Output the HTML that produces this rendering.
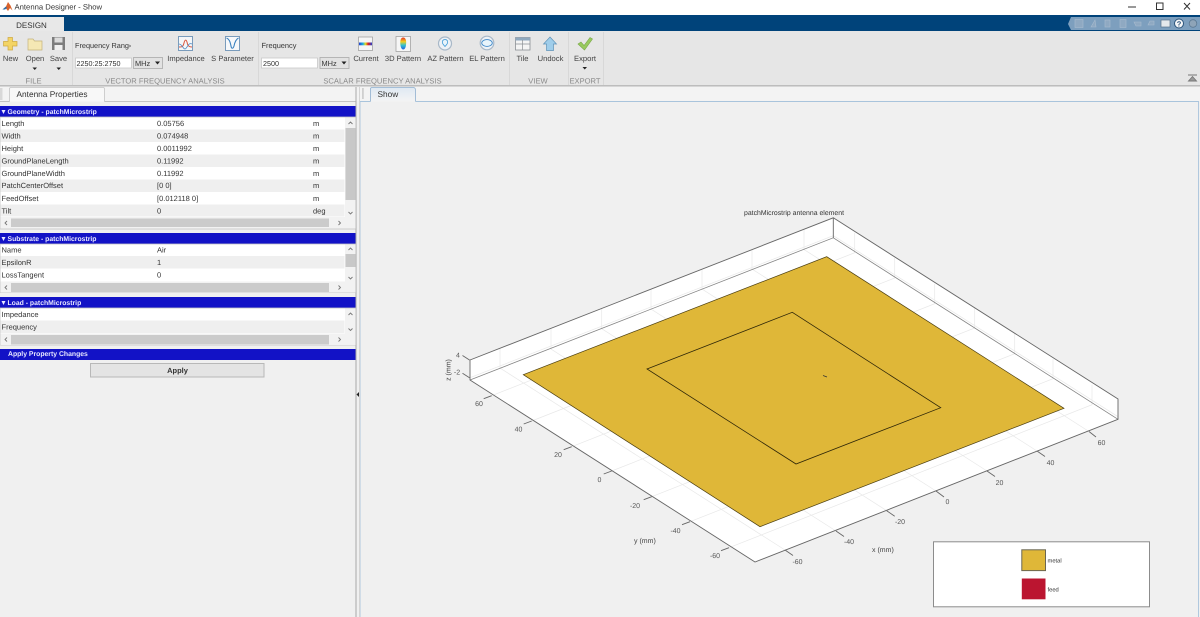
<!DOCTYPE html>
<html><head><meta charset="utf-8"><title>Antenna Designer - Show</title>
<style>
html,body{margin:0;padding:0;background:#f0f0f0;width:1200px;height:617px;overflow:hidden}
svg{display:block;filter:blur(.35px)}
text{font-family:"Liberation Sans",Arial,sans-serif;text-rendering:geometricPrecision}
.r{font-size:7.5px;fill:#333}
.l{font-size:7.6px;fill:#444;text-anchor:middle}
.g{font-size:7.6px;fill:#8a8a8a;text-anchor:middle}
.h{font-size:6.85px;fill:#e8e8ff;font-weight:bold}
.tk{font-size:7px;fill:#555;text-anchor:middle}
.gd{stroke:#e8e8e8;stroke-width:.7;fill:none}
.ax{stroke:#666;stroke-width:.9;fill:none}
.arr{stroke:#777;stroke-width:.9;fill:none}
</style></head><body>
<svg width="1200" height="617" viewBox="0 0 1200 617" xmlns="http://www.w3.org/2000/svg">
<defs>
<linearGradient id="tb" x1="0" x2="0" y1="0" y2="1"><stop offset="0" stop-color="#dfe9f3"/><stop offset="1" stop-color="#f4f4f4"/></linearGradient>
<linearGradient id="rb" x1="0" x2="1" y1="0" y2="0"><stop offset="0" stop-color="#2040d0"/><stop offset=".3" stop-color="#20b0e0"/><stop offset=".5" stop-color="#e0e020"/><stop offset=".7" stop-color="#e02020"/><stop offset="1" stop-color="#2040d0"/></linearGradient>
<linearGradient id="rv" x1="0" x2="0" y1="0" y2="1"><stop offset="0" stop-color="#e83020"/><stop offset=".35" stop-color="#f0d020"/><stop offset=".65" stop-color="#30c0d0"/><stop offset="1" stop-color="#2060e0"/></linearGradient>
</defs>
<rect width="1200" height="617" fill="#f0f0f0"/>

<!-- title bar -->
<rect width="1200" height="15" fill="#fff"/>
<path d="M2.500 9.500 L6 6.500 L8 2 L10.500 5.500 L12.500 10.500 L10 8 L8 11 L6 8.500Z" fill="#d9622b"/>
<path d="M2.500 9.500 L6 6.500 L7 8 L5 9.500Z" fill="#2c6fae"/>
<text x="14.500" y="9.500" font-size="7.700" fill="#333">Antenna Designer - Show</text>
<path d="M1128 7H1136" stroke="#333" stroke-width="1"/>
<rect x="1156.500" y="3" width="6.500" height="6.500" fill="none" stroke="#333" stroke-width="1"/>
<path d="M1184 3L1190 9.500M1190 3L1184 9.500" stroke="#333" stroke-width="1"/>

<!-- blue band -->
<rect y="15" width="1200" height="16" fill="#00437a"/>
<rect x="0" y="17" width="64" height="15" fill="#e8e8e8"/>
<text x="31.500" y="28" font-size="8" fill="#333" text-anchor="middle">DESIGN</text>

<!-- quick access -->
<path d="M1071 17H1200V30H1071L1068 24Z" fill="#7d9fbe"/>
<g fill="#8fa9c2" stroke="#a8bccf" stroke-width=".6">
<rect x="1075" y="19.500" width="8" height="8"/><path d="M1091 27L1095 20L1096 27Z"/><rect x="1105" y="20" width="5" height="7"/><rect x="1120" y="19.500" width="6" height="8"/><path d="M1134 22H1141V26H1136Z"/><path d="M1148 25H1154V21H1150Z"/>
</g>
<rect x="1161" y="20" width="9" height="7" fill="#e4e8ec" stroke="#55718c" stroke-width=".7"/>
<circle cx="1179" cy="23.500" r="4.500" fill="#f4f6f8" stroke="#2d557c" stroke-width="1"/>
<text x="1179" y="26.500" font-size="7.500" font-weight="bold" fill="#2d557c" text-anchor="middle">?</text>
<circle cx="1193" cy="23.500" r="3.800" fill="#8ea4b8" stroke="#5d7a94" stroke-width=".8"/>

<!-- ribbon -->
<rect y="31" width="1200" height="54" fill="#e6e6e6"/>
<rect y="85" width="1200" height="1.500" fill="#bdbdbd"/>
<g stroke="#d8d8d8" stroke-width="1"><path d="M72.500 32V85M258.500 32V85M509.500 32V85M568.500 32V85M603.500 32V85"/></g>

<!-- New -->
<path d="M8 37.500H12.500V41.500H17V46H12.500V50H8V46H3.500V41.500H8Z" fill="#f3d464" stroke="#cfa940" stroke-width=".7"/>
<!-- Open -->
<path d="M28 39H33L34.500 41H42V50H28Z" fill="#f5e8b4" stroke="#c4b27a" stroke-width=".7"/>
<!-- Save -->
<rect x="52" y="37" width="13" height="13" fill="#7d7d7d"/><rect x="54.500" y="37.500" width="8" height="5" fill="#dcdcdc"/><rect x="54.500" y="45" width="8" height="5" fill="#f0f0f0"/>
<text class="l" x="10.500" y="61">New</text><text class="l" x="35" y="61">Open</text><text class="l" x="58.500" y="61">Save</text>
<path d="M32.500 67.500H37L34.750 70ZM56.500 67.500H61L58.750 70ZM582.500 67H587L584.750 69.500Z" fill="#222"/>
<text class="g" x="33.500" y="83.500">FILE</text>

<text x="75" y="48" font-size="7.300" fill="#333">Frequency Rang</text>
<path d="M129.500 44.500l1.500 1.500-1.500 1.500" fill="#555"/>
<rect x="75.500" y="58" width="56" height="10" fill="#fff" stroke="#c8c8c8" stroke-width=".8"/>
<text x="76.500" y="66" font-size="7.200" fill="#333">2250:25:2750</text>
<rect x="133.500" y="57.500" width="29" height="11" fill="#e2e2e2" stroke="#aaa" stroke-width=".8"/>
<text x="135" y="66" font-size="7.400" fill="#333">MHz</text>
<path d="M155 61.500H160L157.500 64.500Z" fill="#222"/>

<rect x="178.500" y="36.500" width="14" height="14" fill="#f4f6f8" stroke="#5e88b0" stroke-width=".8"/>
<path d="M179 47C182 47 183 47 184 43C185 39 186.500 39 187.500 44C188 46 190 47 192 47" fill="none" stroke="#d9533b" stroke-width="1"/>
<path d="M179 44C182 44 183 49 185 49C187 49 188 42 192 44" fill="none" stroke="#4a86c0" stroke-width=".8"/>
<text class="l" x="186" y="61">Impedance</text>
<rect x="225.500" y="36.500" width="14" height="14" fill="#f6f8fa" stroke="#5e88b0" stroke-width=".8"/>
<path d="M226.500 38C229 39 230 41 231 46C231.500 49 233 49 234 46C235 41 236.500 39 238.500 38" fill="none" stroke="#3b82c0" stroke-width="1.100"/>
<text class="l" x="232.500" y="61">S Parameter</text>
<text class="g" x="165" y="83.500">VECTOR FREQUENCY ANALYSIS</text>

<text x="261.500" y="48" font-size="7.400" fill="#333">Frequency</text>
<rect x="261.500" y="58" width="56" height="10" fill="#fff" stroke="#c8c8c8" stroke-width=".8"/>
<text x="263" y="66" font-size="7.200" fill="#333">2500</text>
<rect x="320" y="57.500" width="29" height="11" fill="#e2e2e2" stroke="#aaa" stroke-width=".8"/>
<text x="321.500" y="66" font-size="7.400" fill="#333">MHz</text>
<path d="M341.500 61.500H346.500L344 64.500Z" fill="#222"/>

<rect x="358.500" y="37" width="14" height="13.500" fill="#f6f6f6" stroke="#999" stroke-width=".7"/>
<rect x="359" y="42.500" width="13" height="2.800" fill="url(#rb)"/>
<text class="l" x="366" y="61">Current</text>
<rect x="396" y="36.500" width="14.500" height="15" fill="#f6f6f6" stroke="#999" stroke-width=".7"/>
<path d="M403.200 37.500C406 37.500 406.500 41 406 45C405.700 48 404.500 49.500 403.200 49.500C402 49.500 400.800 48 400.400 45C400 41 400.500 37.500 403.200 37.500Z" fill="url(#rv)"/>
<text class="l" x="403" y="61">3D Pattern</text>
<circle cx="445" cy="43.500" r="6.500" fill="#eef2f6" stroke="#a8b8c8" stroke-width="1.200"/>
<path d="M445 46.500C442.500 44 441.800 42.500 442.500 41C443.500 39 446.500 39 447.500 41C448.200 42.500 447.500 44 445 46.500Z" fill="#e8f4fb" stroke="#3f9ad6" stroke-width=".8"/>
<text class="l" x="445.500" y="61">AZ Pattern</text>
<circle cx="487" cy="43" r="6.800" fill="#eef2f6" stroke="#a8b8c8" stroke-width="1.200"/>
<ellipse cx="487" cy="43" rx="5.300" ry="3.400" fill="#e8f4fb" stroke="#3f88c8" stroke-width=".9"/>
<text class="l" x="487" y="61">EL Pattern</text>
<text class="g" x="382.500" y="83.500">SCALAR FREQUENCY ANALYSIS</text>

<rect x="515.500" y="37.500" width="14.500" height="12.500" fill="#f4f4f4" stroke="#8a8f94" stroke-width=".8"/>
<rect x="515.500" y="37.500" width="14.500" height="3" fill="#8fa9bf"/>
<path d="M515.500 44H530M522.500 40V50" stroke="#8a8f94" stroke-width=".7"/>
<text class="l" x="522.500" y="61">Tile</text>
<path d="M550 37L556.500 44H553.500V50.500H546.500V44H543.500Z" fill="#9fcdea" stroke="#5f93b8" stroke-width=".7"/>
<text class="l" x="550.500" y="61">Undock</text>
<text class="g" x="538" y="83.500">VIEW</text>
<path d="M578 44L581 42L584 45.500L590 37.500L592.500 39L584.500 50Z" fill="#98ca5e" stroke="#7aa848" stroke-width=".6"/>
<text class="l" x="585" y="61">Export</text>
<text class="g" x="585" y="83.500">EXPORT</text>
<path d="M1188 75H1197M1192.500 76.500L1188.500 81H1196.500Z" stroke="#777" stroke-width=".9" fill="#999"/>

<!-- tabs row -->
<rect y="87" width="1200" height="14" fill="#f3f3f3"/>
<rect x="0" y="88" width="2.500" height="12" fill="#d8d8d8"/>
<path d="M9.500 101.500V89Q9.500 87.500 11 87.500H103Q104.500 87.500 104.500 89V101.500" fill="#f8f8f8" stroke="#c4c4c4" stroke-width=".8"/>
<path d="M0 101.500H9.500M104.500 101.500H356" stroke="#b4b4b4" stroke-width=".8"/>
<text x="16.500" y="97" font-size="8.300" fill="#333">Antenna Properties</text>
<rect x="362" y="88" width="1.800" height="11" fill="#cfcfcf"/>
<path d="M370.500 101.500V89Q370.500 87.500 372 87.500H413Q415.500 87.500 415.500 90V101.500" fill="url(#tb)" stroke="#8fb0cf" stroke-width=".8"/>
<text x="377.500" y="97" font-size="8.300" fill="#333">Show</text>
<path d="M360 101.500H370.500M415.500 101.500H1198.500V617M360 101.500V617" stroke="#a9c4dc" stroke-width=".9" fill="none"/>

<!-- splitter -->
<rect x="355.500" y="87" width="1" height="530" fill="#a8a8a8"/>
<rect x="359" y="87" width="1" height="530" fill="#d4d4d4"/>
<path d="M359 392V397L356.500 394.500Z" fill="#222"/>

<!-- Geometry panel -->
<rect x="0" y="106" width="355.500" height="11" fill="#1212c6"/>
<path d="M1.500 110H5.500L3.500 114Z" fill="#e8e8ff"/>
<text class="h" x="7.500" y="114">Geometry - patchMicrostrip</text>
<rect x="0" y="117" width="355.500" height="112" fill="#fff" stroke="#c4c4c4" stroke-width=".8"/>
<g fill="#efefef"><rect x=".5" y="129.500" width="344" height="12.500"/><rect x=".5" y="154.500" width="344" height="12.500"/><rect x=".5" y="179.500" width="344" height="12.500"/><rect x=".5" y="204.500" width="344" height="12"/></g>
<g class="r">
<text x="1.500" y="126">Length</text><text x="157" y="126">0.05756</text><text x="313" y="126">m</text>
<text x="1.500" y="138.500">Width</text><text x="157" y="138.500">0.074948</text><text x="313" y="138.500">m</text>
<text x="1.500" y="151">Height</text><text x="157" y="151">0.0011992</text><text x="313" y="151">m</text>
<text x="1.500" y="163.500">GroundPlaneLength</text><text x="157" y="163.500">0.11992</text><text x="313" y="163.500">m</text>
<text x="1.500" y="176">GroundPlaneWidth</text><text x="157" y="176">0.11992</text><text x="313" y="176">m</text>
<text x="1.500" y="188">PatchCenterOffset</text><text x="157" y="188">[0 0]</text><text x="313" y="188">m</text>
<text x="1.500" y="201">FeedOffset</text><text x="157" y="201">[0.012118 0]</text><text x="313" y="201">m</text>
<text x="1.500" y="213.500">Tilt</text><text x="157" y="213.500">0</text><text x="313" y="213.500">deg</text>
</g>
<rect x="345" y="117.500" width="10.500" height="100" fill="#f2f2f2"/>
<rect x="345.500" y="128" width="10" height="72" fill="#c8c8c8"/>
<rect x=".5" y="217" width="355" height="11.500" fill="#f2f2f2"/>
<rect x="11" y="218.500" width="318" height="8.500" fill="#cbcbcb"/>
<path class="arr" d="M348.500 124l2-2 2 2M348.500 212l2 2 2-2M7 221l-2 2 2 2M338.500 221l2 2-2 2"/>

<!-- Substrate panel -->
<rect x="0" y="233" width="355.500" height="11" fill="#1212c6"/>
<path d="M1.500 237H5.500L3.500 241Z" fill="#e8e8ff"/>
<text class="h" x="7.500" y="241">Substrate - patchMicrostrip</text>
<rect x="0" y="244" width="355.500" height="48.500" fill="#fff" stroke="#c4c4c4" stroke-width=".8"/>
<rect x=".5" y="256" width="344" height="12.500" fill="#efefef"/>
<g class="r"><text x="1.500" y="252.500">Name</text><text x="157" y="252.500">Air</text>
<text x="1.500" y="265">EpsilonR</text><text x="157" y="265">1</text>
<text x="1.500" y="277.500">LossTangent</text><text x="157" y="277.500">0</text></g>
<rect x="345" y="244.500" width="10.500" height="37.500" fill="#f2f2f2"/>
<rect x="345.500" y="254" width="10" height="13" fill="#c8c8c8"/>
<rect x=".5" y="281.500" width="355" height="11" fill="#f2f2f2"/>
<rect x="11" y="283" width="318" height="9" fill="#cbcbcb"/>
<path class="arr" d="M348.500 250l2-2 2 2M348.500 277l2 2 2-2M7 285.500l-2 2 2 2M338.500 285.500l2 2-2 2"/>

<!-- Load panel -->
<rect x="0" y="297" width="355.500" height="11" fill="#1212c6"/>
<path d="M1.500 301H5.500L3.500 305Z" fill="#e8e8ff"/>
<text class="h" x="7.500" y="305">Load - patchMicrostrip</text>
<rect x="0" y="308" width="355.500" height="37" fill="#fff" stroke="#c4c4c4" stroke-width=".8"/>
<rect x=".5" y="320.500" width="344" height="12.500" fill="#efefef"/>
<g class="r"><text x="1.500" y="317">Impedance</text><text x="1.500" y="329.500">Frequency</text></g>
<rect x="345" y="308.500" width="10.500" height="25" fill="#f2f2f2"/>
<rect x=".5" y="333.500" width="355" height="11.500" fill="#f2f2f2"/>
<rect x="11" y="335" width="318" height="9.500" fill="#cbcbcb"/>
<path class="arr" d="M348.500 315l2-2 2 2M348.500 328.500l2 2 2-2M7 337.500l-2 2 2 2M338.500 337.500l2 2-2 2"/>

<!-- Apply -->
<rect x="0" y="349" width="355.500" height="11" fill="#1212c6"/>
<text class="h" x="8" y="356">Apply Property Changes</text>
<rect x="90.500" y="363.500" width="173.500" height="13.500" fill="#e4e4e4" stroke="#b8b8b8" stroke-width="1"/>
<text x="177.500" y="373" font-size="7.500" font-weight="bold" fill="#333" text-anchor="middle">Apply</text>

<!-- 3D plot -->
<text x="794" y="215" font-size="6.900" fill="#333" text-anchor="middle">patchMicrostrip antenna element</text>
<path d="M470 380V360L833.300 217.800L1118 399V419.300L755 562Z" fill="#fff"/>
<g class="gd">
<path d="M785 550L500 368V348M836 531L551 349V329M886.700 510.700L601.700 328.700V308.700M936 491L651 309V289M987 471L702 289V269M1037 451L752 269V249M1089 431.500L804 249.500V229.500"/>
<path d="M491.700 395.700L854.700 252.700V232.700M531.700 421L894.700 278V258M571.700 446.700L934.700 303.700V283.700M611.700 471L974.700 328V308M651.700 496.700L1014.700 353.700V333.700M690 521.700L1053 378.700V358.700M729 547.700L1092 404.700V384.700"/>
<path d="M470 377.700L833.300 235.700L1118 416.700"/>
</g>
<path d="M470 380L833.300 237.800L1118 419.300" fill="none" stroke="#858585" stroke-width=".8"/>
<path class="ax" d="M470 380V360L833.300 217.800L1118 399V419.300L755 562Z"/>
<path class="ax" d="M833.300 217.800V237.800"/>
<path class="ax" d="M785 550l8 5.500M836 531l8 5.500M886.700 510.700l8 5.500M936 491l8 6M987 471l8 5.500M1037 451l8 5.500M1089 431.500l7 5.500"/>
<path class="ax" d="M491.700 395.700l-8 3M531.700 421l-8 3M571.700 446.700l-8 3M611.700 471l-8 3M651.700 496.700l-8 3M690 521.700l-8 3M729 547.700l-8 3"/>
<path class="ax" d="M469.500 360l-7-4.500M469.500 377.700l-7-4.500"/>
<path d="M523.300 374.700L826.700 256.700L1064 408.300L760 526.700Z" fill="#dfb738" stroke="#4a3d10" stroke-width=".7"/>
<path d="M647 369L792.300 312.300L940.700 407.700L796 464Z" fill="none" stroke="#2e2608" stroke-width=".8"/>
<path d="M823 375.500L827 377" stroke="#333" stroke-width=".8"/>
<g class="tk">
<text x="797.500" y="564">-60</text><text x="849" y="544">-40</text><text x="900" y="524">-20</text><text x="947.500" y="504">0</text><text x="999.500" y="485">20</text><text x="1050.500" y="465">40</text><text x="1101.500" y="445">60</text>
<text x="479" y="406">60</text><text x="518.500" y="431.500">40</text><text x="558" y="457">20</text><text x="599.500" y="482">0</text><text x="635" y="508">-20</text><text x="675.500" y="533">-40</text><text x="715" y="558">-60</text>
<text x="458" y="357.500">4</text><text x="457" y="374.500">-2</text>
</g>
<text x="634" y="543" font-size="7" fill="#444">y (mm)</text>
<text x="872" y="552" font-size="7" fill="#444">x (mm)</text>
<text font-size="7" fill="#444" text-anchor="middle" transform="translate(450.500 370) rotate(-90)">z (mm)</text>

<!-- legend -->
<rect x="933.500" y="541.800" width="216" height="65" fill="#fff" stroke="#8c8c8c" stroke-width="1"/>
<rect x="1021.800" y="549.800" width="23.700" height="20.800" fill="#dfb738" stroke="#6b6650" stroke-width="1"/>
<rect x="1021.800" y="578.500" width="23.700" height="20.800" fill="#bb1530"/>
<text x="1047.500" y="562.500" font-size="5.800" fill="#333">metal</text>
<text x="1047.500" y="591.500" font-size="5.800" fill="#333">feed</text>
</svg>
</body></html>
